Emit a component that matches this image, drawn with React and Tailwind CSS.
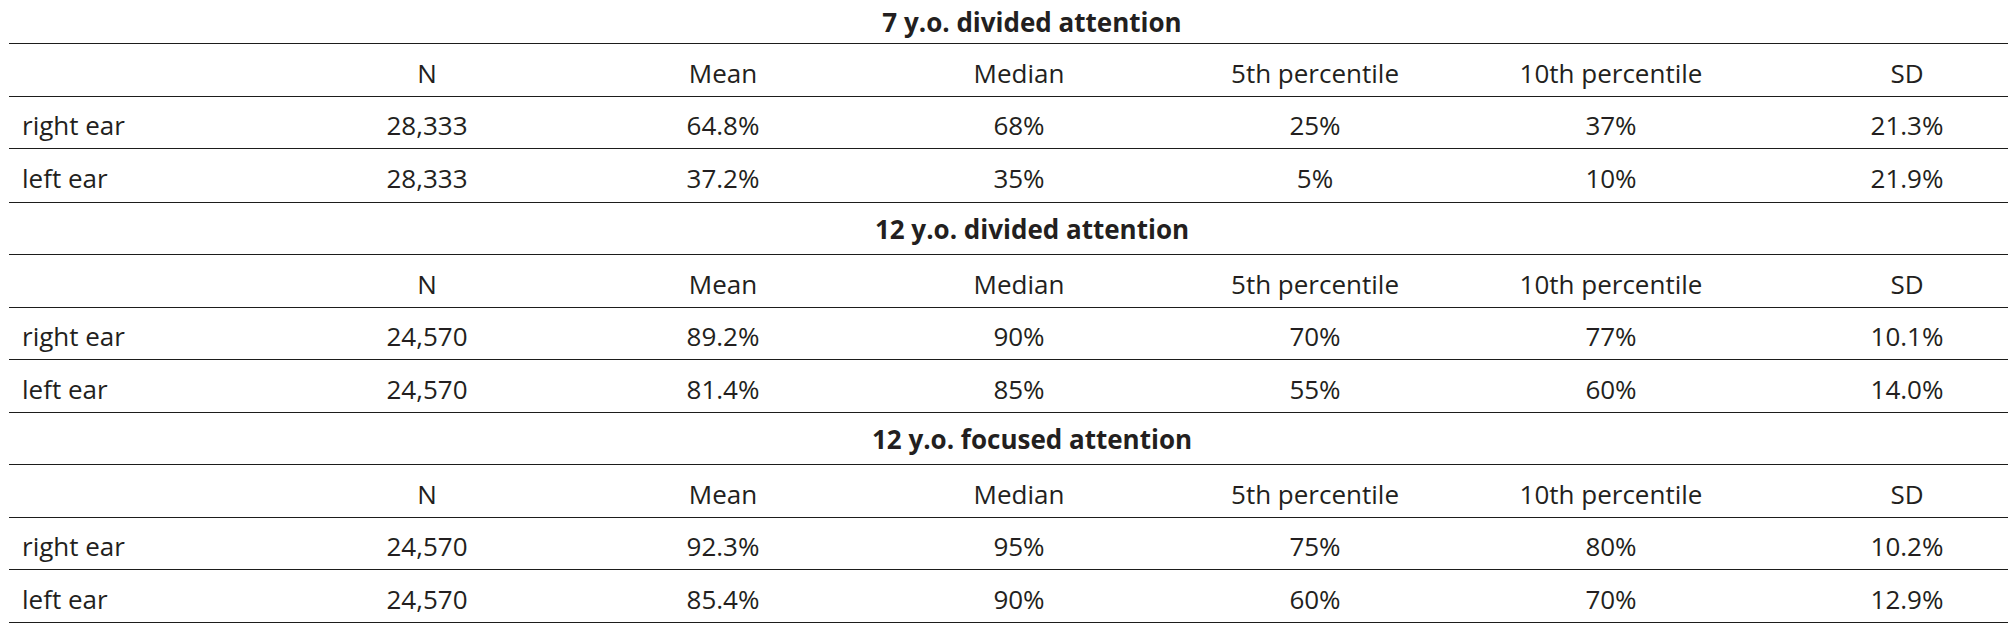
const cols = ["N", "Mean", "Median", "5th percentile", "10th percentile", "SD"];

const sections = [
  {
    title: "7 y.o. divided attention",
    first: true,
    rows: [
      ["right ear", "28,333", "64.8%", "68%", "25%", "37%", "21.3%"],
      ["left ear", "28,333", "37.2%", "35%", "5%", "10%", "21.9%"],
    ],
  },
  {
    title: "12 y.o. divided attention",
    rows: [
      ["right ear", "24,570", "89.2%", "90%", "70%", "77%", "10.1%"],
      ["left ear", "24,570", "81.4%", "85%", "55%", "60%", "14.0%"],
    ],
  },
  {
    title: "12 y.o. focused attention",
    rows: [
      ["right ear", "24,570", "92.3%", "95%", "75%", "80%", "10.2%"],
      ["left ear", "24,570", "85.4%", "90%", "60%", "70%", "12.9%"],
    ],
  },
];

function Row({ cells, height }) {
  return (
    <div className={`grid grid-cols-[270px_repeat(6,296px)] items-center border-b border-[#1d1d1b] pt-[5px] ${height}`}>
      {cells.map((c, i) => (
        <div key={i} className={i === 0 ? "pl-[13px] text-left" : "text-center"}>
          {c}
        </div>
      ))}
    </div>
  );
}

function Section({ s }) {
  return (
    <div>
      <div
        className={`flex items-center justify-center border-b border-[#1d1d1b] font-bold ${
          s.first ? "h-[44px]" : "h-[52px]"
        }`}
      >
        {s.title}
      </div>
      <Row cells={["", ...cols]} height="h-[53px]" />
      <Row cells={s.rows[0]} height={s.first ? "h-[52px]" : "h-[52px]"} />
      <Row cells={s.rows[1]} height={s.first ? "h-[54px]" : "h-[53px]"} />
    </div>
  );
}

export default function App() {
  return (
    <div className="w-[2008px] h-[632px] overflow-hidden bg-white pl-[9px]">
      <div className="w-[2046px] text-[26px] leading-none text-[#231f20] font-['Open_Sans',sans-serif]">
        {sections.map((s) => (
          <Section key={s.title} s={s} />
        ))}
      </div>
    </div>
  );
}
